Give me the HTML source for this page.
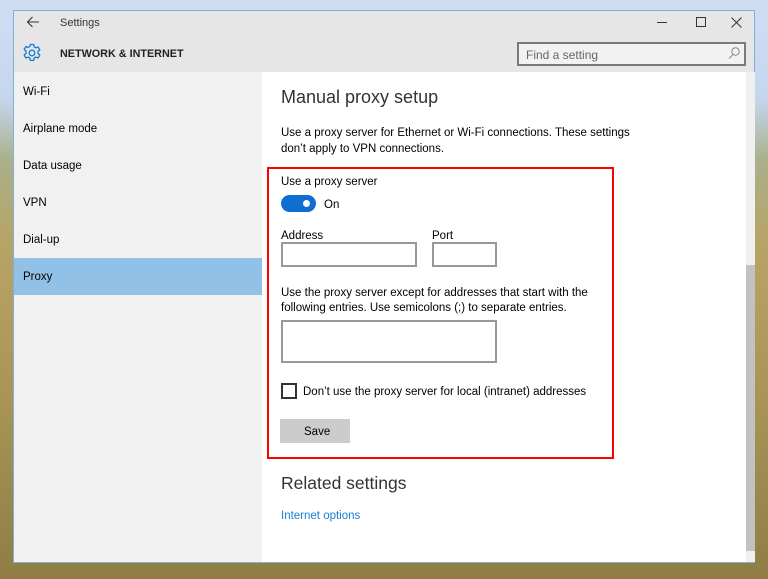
<!DOCTYPE html>
<html><head><style>
*{margin:0;padding:0;box-sizing:border-box}
body{width:768px;height:579px;overflow:hidden;position:relative;font-family:"Liberation Sans",sans-serif;color:#000;
background:linear-gradient(180deg,#cfdff2 0px,#c4d6ee 100px,#a9b08a 160px,#b7a466 240px,#a89456 400px,#8f7d45 579px);}
.a{position:absolute}
.win{left:13px;top:10px;width:742px;height:553px;background:#fff;border:1px solid #7eb0dd}
.t{font-size:11.5px;white-space:nowrap;margin-top:1px}
</style></head><body>
<div class="a win"></div>
<div class="a" style="left:14px;top:11px;width:740px;height:61px;background:#e6e6e6"></div>
<svg class="a" style="left:26px;top:16px" width="14" height="12" viewBox="0 0 14 12"><path d="M13 6H1.5M6.5 1L1.5 6l5 5" stroke="#333" fill="none" stroke-width="1.1"/></svg>
<div class="a t" style="left:60px;top:16px;font-size:11px;color:#333">Settings</div>
<div class="a" style="left:657px;top:22px;width:10px;height:1px;background:#333"></div>
<div class="a" style="left:696px;top:17px;width:10px;height:10px;border:1px solid #333"></div>
<svg class="a" style="left:731px;top:17px" width="11" height="11"><path d="M0.5 0.5l10 10M10.5 0.5l-10 10" stroke="#333"/></svg>
<svg class="a" style="left:22px;top:43px" width="20" height="20" viewBox="0 0 20 20"><g stroke="#1a7cd4" fill="none" stroke-width="1.3"><path d="M8.3 1.5h3.4l.5 2.4 1.6.9 2.3-.8 1.7 2.9-1.8 1.6v1.9l1.8 1.6-1.7 2.9-2.3-.8-1.6.9-.5 2.4H8.3l-.5-2.4-1.6-.9-2.3.8-1.7-2.9 1.8-1.6V8.1L2.2 6.5l1.7-2.9 2.3.8 1.6-.9z"/><circle cx="10" cy="10" r="2.8"/></g></svg>
<div class="a t" style="left:60px;top:47px;font-size:10.8px;font-weight:bold;color:#222">NETWORK &amp; INTERNET</div>
<div class="a" style="left:517px;top:42px;width:229px;height:24px;border:2px solid #7a7a7a;background:#f2f2f2"></div>
<div class="a t" style="left:526px;top:47px;font-size:12px;color:#666">Find a setting</div>
<svg class="a" style="left:728px;top:47px" width="12" height="13"><circle cx="7.5" cy="4.5" r="3.7" stroke="#888" fill="none"/><path d="M5 7.5L1 11.5" stroke="#888"/></svg>
<div class="a" style="left:14px;top:72px;width:248px;height:490px;background:#f1f1f1"></div>
<div class="a t" style="left:23px;top:85px">Wi-Fi</div>
<div class="a t" style="left:23px;top:122px">Airplane mode</div>
<div class="a t" style="left:23px;top:159px">Data usage</div>
<div class="a t" style="left:23px;top:196px">VPN</div>
<div class="a t" style="left:23px;top:233px">Dial-up</div>
<div class="a" style="left:14px;top:258px;width:248px;height:37px;background:#91c1e7"></div>
<div class="a t" style="left:23px;top:270px">Proxy</div>
<div class="a" style="left:746px;top:72px;width:9px;height:490px;background:#f0f0f0"></div>
<div class="a" style="left:746px;top:265px;width:9px;height:286px;background:#c2c2c2"></div>
<div class="a t" style="left:281px;top:86px;font-size:18px;color:#333">Manual proxy setup</div>
<div class="a t" style="left:281px;top:124px;line-height:16px">Use a proxy server for Ethernet or Wi-Fi connections. These settings<br>don’t apply to VPN connections.</div>
<div class="a" style="left:267px;top:167px;width:347px;height:292px;border:2px solid #f00"></div>
<div class="a t" style="left:281px;top:175px">Use a proxy server</div>
<div class="a" style="left:281px;top:195px;width:35px;height:17px;border-radius:9px;background:#0f6fd0"></div>
<div class="a" style="left:303px;top:200px;width:7px;height:7px;border-radius:4px;background:#fff"></div>
<div class="a t" style="left:324px;top:198px">On</div>
<div class="a t" style="left:281px;top:229px">Address</div>
<div class="a t" style="left:432px;top:229px">Port</div>
<div class="a" style="left:281px;top:242px;width:136px;height:25px;border:2px solid #999"></div>
<div class="a" style="left:432px;top:242px;width:65px;height:25px;border:2px solid #999"></div>
<div class="a t" style="left:281px;top:285px;line-height:15px">Use the proxy server except for addresses that start with the<br>following entries. Use semicolons (;) to separate entries.</div>
<div class="a" style="left:281px;top:320px;width:216px;height:43px;border:2px solid #999"></div>
<div class="a" style="left:281px;top:383px;width:16px;height:16px;border:2px solid #333"></div>
<div class="a t" style="left:303px;top:385px">Don’t use the proxy server for local (intranet) addresses</div>
<div class="a" style="left:280px;top:419px;width:70px;height:24px;background:#cccccc"></div>
<div class="a t" style="left:304px;top:425px">Save</div>
<div class="a t" style="left:281px;top:472px;font-size:17.5px;color:#333">Related settings</div>
<div class="a t" style="left:281px;top:509px;color:#1a7cd4">Internet options</div>
</body></html>
